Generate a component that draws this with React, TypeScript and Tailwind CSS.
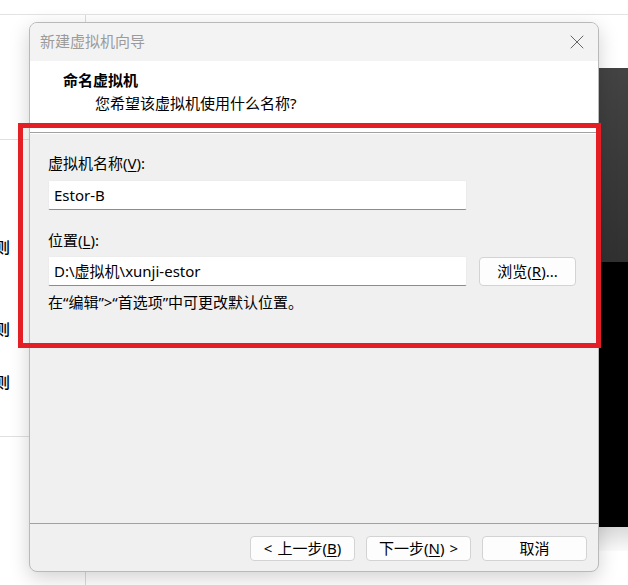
import { X } from 'lucide-react'

const FONT = 'font-["Noto_Sans","Noto_Sans_CJK_SC",sans-serif]'

const Mnemonic = ({ text, k }: { text: string; k: string }) => (
  <>
    {text}(<span className="underline underline-offset-2">{k}</span>)
  </>
)

const Background = () => (
  <div className="flex flex-col h-full">
    <div className="h-[15px] border-b border-[#e3e3e3] shrink-0" />
    <div className="flex flex-1">
      <div className="w-[86px] border-r border-[#dcdcdc] flex flex-col">
        <div className="h-[125px] border-b border-[#e0e0e0]" />
        <div className="h-[297px] border-b border-[#e0e0e0] flex flex-col text-[15px] leading-5 font-medium text-black -ml-[5px]">
          <span className="mt-[97px]">则</span>
          <span className="mt-[62px]">则</span>
          <span className="mt-[33px]">则</span>
        </div>
      </div>
      <div className="flex-1" />
      <div className="w-[30px] flex flex-col">
        <div className="h-[53px]" />
        <div className="h-[194px] bg-[linear-gradient(160deg,#444_0%,#303030_100%)]" />
        <div className="h-[265px] bg-black" />
        <div className="h-[24px] bg-[linear-gradient(#dadada,#fafafa)]" />
      </div>
    </div>
  </div>
)

const TextBox = ({ value }: { value: string }) => (
  <div className="h-[30px] w-[419px] bg-white border border-[#ececec] border-b-[#8c8c8c] rounded-[2px] flex items-center px-[5px] text-[15px] text-black">
    {value}
  </div>
)

const Btn = ({ children, className = '' }: { children: React.ReactNode; className?: string }) => (
  <button className={`bg-[#fdfdfd] border border-[#d3d3d3] rounded-[4px] text-[15px] leading-none text-black flex items-center justify-center ${className}`}>
    {children}
  </button>
)

const Dialog = () => (
  <div className="absolute left-[29px] top-[22px] w-[570px] rounded-[8px] border border-[#b9b9b9] bg-[#f0f0f0] overflow-hidden shadow-[0_6px_20px_rgba(0,0,0,0.18)] flex flex-col">
    <div className="h-[38px] bg-[#f3f3f3] flex items-center justify-between pl-[10px] pr-[9px]">
      <span className="text-[15px] text-[#9b9b9b] -mt-[1px]">新建虚拟机向导</span>
      <X className="w-[24px] h-[24px] text-[#666]" strokeWidth={1} />
    </div>
    <div className="h-[71px] bg-white pt-[9px] flex flex-col">
      <span className="pl-[33px] text-[15px] leading-5 font-bold text-black">命名虚拟机</span>
      <span className="pl-[65px] mt-[3px] text-[15px] leading-5 text-black">您希望该虚拟机使用什么名称?</span>
    </div>
    <div className="border-t border-[#a0a0a0] border-b border-b-white" />
    <div className="h-[389px] px-[18px] pt-[19px] flex flex-col">
      <span className="text-[15px] leading-5 text-black mb-[7px]">
        <Mnemonic text="虚拟机名称" k="V" />:
      </span>
      <TextBox value="Estor-B" />
      <span className="text-[15px] leading-5 text-black mt-[20px] mb-[6px]">
        <Mnemonic text="位置" k="L" />:
      </span>
      <div className="flex items-center gap-[12px]">
        <TextBox value="D:\虚拟机\xunji-estor" />
        <Btn className="w-[97px] h-[29px]">
          <Mnemonic text="浏览" k="R" />...
        </Btn>
      </div>
      <span className="text-[15px] leading-5 text-black mt-[6px]">在“编辑”&gt;“首选项”中可更改默认位置。</span>
    </div>
    <div className="border-t border-[#a0a0a0]" />
    <div className="h-[47px] flex justify-end items-start gap-[11px] pr-[11px] pt-[12px]">
      <Btn className="w-[105px] h-[25px]">
        &lt; <span className="ml-[5px]"><Mnemonic text="上一步" k="B" /></span>
      </Btn>
      <Btn className="w-[105px] h-[25px]">
        <Mnemonic text="下一步" k="N" /> <span className="ml-[5px]">&gt;</span>
      </Btn>
      <Btn className="w-[105px] h-[25px]">取消</Btn>
    </div>
  </div>
)

export default function App() {
  return (
    <div className={`relative w-[628px] h-[585px] bg-white overflow-hidden ${FONT}`}>
      <Background />
      <Dialog />
      {/* annotation box drawn over the screenshot */}
      <div className="absolute left-[18px] top-[123px] w-[583px] h-[225px] border-[5px] border-[#e41e25] pointer-events-none" />
    </div>
  )
}
